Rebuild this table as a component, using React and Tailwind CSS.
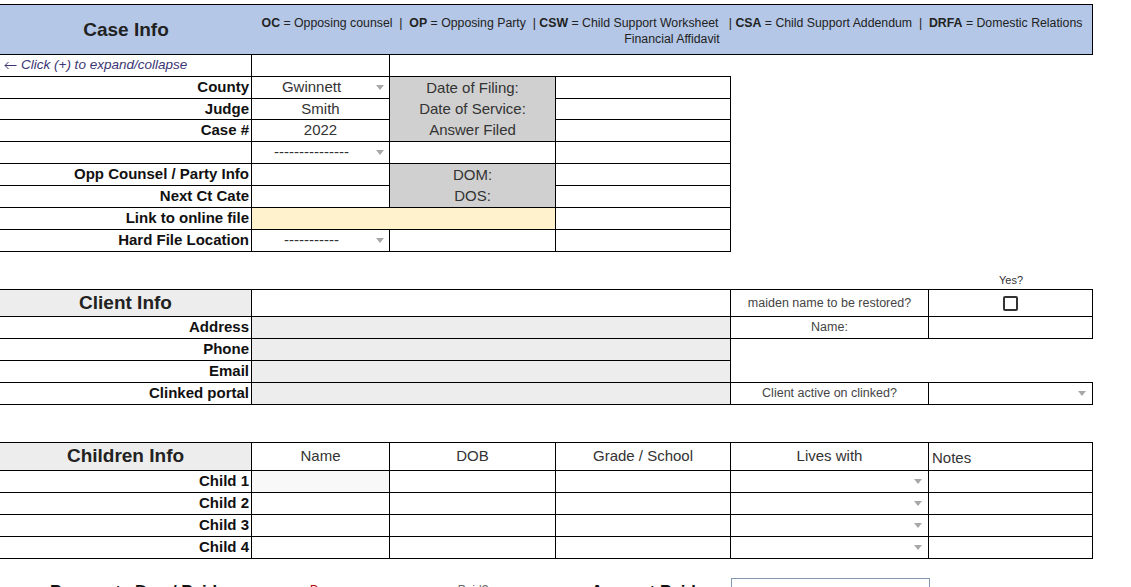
import React from "react";

// Little grey dropdown marker that Excel draws in validated cells.
function Arrow() {
  return (
    <svg width="8" height="5" viewBox="0 0 8 5" className="shrink-0">
      <path d="M0 0h8L4 5z" fill="#a8a8a8" />
    </svg>
  );
}

function Pick({ value }) {
  return (
    <div className="flex h-full items-center">
      <span className="flex-1 text-center">{value}</span>
      <span className="flex w-[18px] justify-center"><Arrow /></span>
    </div>
  );
}

const caseRows = [
  { label: "County", value: "Gwinnett", arrow: true, side: "Date of Filing:", gray: true, h: "h-[22px]" },
  { label: "Judge", value: "Smith", side: "Date of Service:", gray: true, h: "h-[21px]" },
  { label: "Case #", value: "2022", side: "Answer Filed", gray: true, line: true, h: "h-[22px]" },
  { label: "", value: "---------------", arrow: true, side: "", line: true, h: "h-[22px]" },
  { label: "Opp Counsel / Party Info", value: "", side: "DOM:", gray: true, h: "h-[22px]" },
  { label: "Next Ct Cate", value: "", side: "DOS:", gray: true, line: true, h: "h-[22px]" },
  { label: "Link to online file", link: true, h: "h-[22px]" },
  { label: "Hard File Location", value: "-----------", arrow: true, side: "", line: true, h: "h-[22px]" },
];

const clientRows = ["Address", "Phone", "Email", "Clinked portal"];

function CaseInfo() {
  return (
    <div>
      <div className="mt-[4px] flex h-[51px] w-[1093px] border-y border-r border-black bg-[#b4c7e7]">
        <div className="flex w-[252px] items-center justify-center pt-[2px] text-[19px] font-bold text-[#222]">Case Info</div>
        <div className="flex flex-1 items-center justify-center pt-[2px] text-center text-[12.3px] leading-[16px] text-[#222] whitespace-pre">
          <p>
            <b>OC</b> = Opposing counsel  |  <b>OP</b> = Opposing Party  | <b>CSW</b> = Child Support Worksheet   | <b>CSA</b> = Child Support Addendum  |  <b>DRFA</b> = Domestic Relations
            <br />Financial Affidavit
          </p>
        </div>
      </div>

      <div className="flex h-[22px]">
        <div className="flex w-[252px] items-center border-r border-b border-black pl-[4px] text-[13.5px] italic text-[#3b3573]">
          <svg width="13" height="9" viewBox="0 0 13 9" className="mr-[4px] shrink-0">
            <path d="M12.5 4.5H1M4.5 1 1 4.5 4.5 8" fill="none" stroke="#3b3573" strokeWidth="1" />
          </svg>
          Click (+) to expand/collapse
        </div>
        <div className="w-[138px] border-r border-b border-black" />
        <div className="w-[166px] border-b border-black" />
        <div className="w-[175px] border-b border-black" />
      </div>

      {caseRows.map((r, i) => (
        <div key={i} className={`flex ${r.h} text-[15px]`}>
          <div className="flex w-[252px] items-center justify-end border-r border-b border-black pr-[2px] font-bold text-[#111]">{r.label}</div>
          {r.link ? (
            <div className="w-[304px] border-r border-b border-black bg-[#fff2cc]" />
          ) : (
            <>
              <div className="w-[138px] border-r border-b border-black text-[#333]">
                {r.arrow ? <Pick value={r.value} /> : <div className="flex h-full items-center justify-center">{r.value}</div>}
              </div>
              <div className={`flex w-[166px] items-center justify-center border-r border-black text-[#333] ${r.gray ? "bg-[#d0d0d0]" : ""} ${r.line ? "border-b" : ""}`}>{r.side}</div>
            </>
          )}
          <div className="w-[175px] border-r border-b border-black" />
        </div>
      ))}
    </div>
  );
}

function ClientInfo() {
  return (
    <div>
      <div className="flex h-[37px]">
        <div className="w-[929px]" />
        <div className="flex w-[164px] items-end justify-center pb-[1px] text-[11px] text-[#333]">Yes?</div>
      </div>
      <div className="flex h-[28px] w-[1093px] border-t border-black">
        <div className="flex w-[252px] items-center justify-center border-r border-b border-black bg-[#ededed] text-[19px] font-bold text-[#222]">Client Info</div>
        <div className="w-[479px] border-r border-b border-black" />
        <div className="flex w-[198px] items-center justify-center border-r border-b border-black text-[12.5px] text-[#444]">maiden name to be restored?</div>
        <div className="flex w-[164px] items-center justify-center border-r border-b border-black">
          <span className="h-[15px] w-[15px] rounded-[2px] border-2 border-[#333]" />
        </div>
      </div>
      {clientRows.map((label, i) => (
        <div key={label} className="flex h-[22px] text-[15px]">
          <div className="flex w-[252px] items-center justify-end border-r border-b border-black pr-[2px] font-bold text-[#111]">{label}</div>
          <div className="w-[479px] border-r border-b border-black bg-[#ededed]" />
          {i === 0 && (
            <>
              <div className="flex w-[198px] items-center justify-center border-r border-b border-black text-[12.5px] text-[#444]">Name:</div>
              <div className="w-[164px] border-r border-b border-black" />
            </>
          )}
          {i === 2 && <div className="w-[362px] border-b border-black" />}
          {i === 3 && (
            <>
              <div className="flex w-[198px] items-center justify-center border-r border-b border-black text-[12.5px] text-[#444]">Client active on clinked?</div>
              <div className="flex w-[164px] items-center justify-end border-r border-b border-black pr-[6px]"><Arrow /></div>
            </>
          )}
        </div>
      ))}
    </div>
  );
}

function ChildrenInfo() {
  return (
    <div className="mt-[37px]">
      <div className="flex h-[29px] w-[1093px] border-t border-black text-[15px] text-[#333]">
        <div className="flex w-[252px] items-center justify-center border-r border-b border-black bg-[#ededed] text-[19px] font-bold text-[#222]">Children Info</div>
        <div className="flex w-[138px] items-center justify-center border-r border-b border-black">Name</div>
        <div className="flex w-[166px] items-center justify-center border-r border-b border-black">DOB</div>
        <div className="flex w-[175px] items-center justify-center border-r border-b border-black">Grade / School</div>
        <div className="flex w-[198px] items-center justify-center border-r border-b border-black">Lives with</div>
        <div className="flex w-[164px] items-end border-r border-b border-black pb-[1px] pl-[3px]">Notes</div>
      </div>
      {[1, 2, 3, 4].map((n) => (
        <div key={n} className="flex h-[22px] text-[15px]">
          <div className="flex w-[252px] items-center justify-end border-r border-b border-black pr-[2px] font-bold text-[#111]">Child {n}</div>
          <div className={`w-[138px] border-r border-b border-black ${n === 1 ? "bg-[#f8f8f8]" : ""}`} />
          <div className="w-[166px] border-r border-b border-black" />
          <div className="w-[175px] border-r border-b border-black" />
          <div className="flex w-[198px] items-center justify-end border-r border-b border-black pr-[6px]"><Arrow /></div>
          <div className="w-[164px] border-r border-b border-black" />
        </div>
      ))}
    </div>
  );
}

function Payments() {
  return (
    <div className="mt-[19px] flex h-[40px] items-start">
      <div className="w-[252px] pl-[50px] pt-[1px] text-[17px] font-bold text-[#111]">Payments Due / Paid</div>
      <div className="w-[138px] pt-[3px] text-center text-[12px] text-[#c00000]">Due</div>
      <div className="w-[166px] pt-[3px] text-center text-[12px] text-[#666]">Paid?</div>
      <div className="w-[175px] pt-[1px] text-center text-[17px] font-bold text-[#111]">Amount Paid</div>
      <div className="h-[30px] w-[199px] border border-[#8497b0]" />
    </div>
  );
}

export default function App() {
  return (
    <div className="h-[587px] w-[1131px] overflow-hidden bg-white font-['Liberation_Sans',Arial,sans-serif]">
      <CaseInfo />
      <ClientInfo />
      <ChildrenInfo />
      <Payments />
    </div>
  );
}
